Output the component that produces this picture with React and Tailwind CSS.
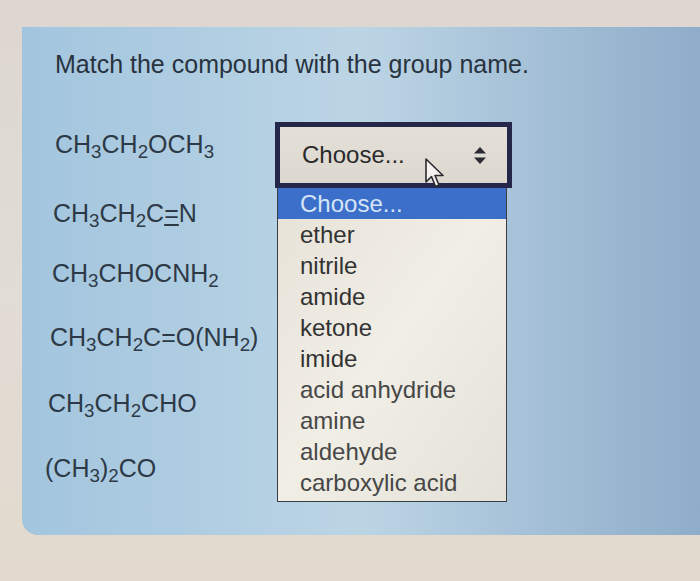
import React from 'react';

const FONT = "font-['Liberation_Sans',Arial,sans-serif]";

// formulas as [text, sub] chunks so subscripts render with <sub>
const compounds = [
  { key: 'ether', pad: 'pl-[10px]', gap: 'mt-0', parts: ['CH', '3', 'CH', '2', 'OCH', '3'] },
  { key: 'nitrile', pad: 'pl-[8px]', gap: 'mt-[39px]', parts: ['CH', '3', 'CH', '2', 'C', '≡', 'N'] },
  { key: 'amide', pad: 'pl-[7px]', gap: 'mt-[30px]', parts: ['CH', '3', 'CHOCNH', '2'] },
  { key: 'imide', pad: 'pl-[5px]', gap: 'mt-[34px]', parts: ['CH', '3', 'CH', '2', 'C=O(NH', '2', ')'] },
  { key: 'ald', pad: 'pl-[3px]', gap: 'mt-[36px]', parts: ['CH', '3', 'CH', '2', 'CHO'] },
  { key: 'ketone', pad: 'pl-0', gap: 'mt-[35px]', parts: ['(CH', '3', ')', '2', 'CO'] },
];

const options = [
  'ether',
  'nitrile',
  'amide',
  'ketone',
  'imide',
  'acid anhydride',
  'amine',
  'aldehyde',
  'carboxylic acid',
];

const Formula = ({ parts }) => (
  <span>
    {parts.map((p, i) => {
      if (p === '≡') {
        // triple bond drawn as an underlined "="
        return (
          <span key={i} className="underline decoration-[1.5px] underline-offset-[2px]">
            =
          </span>
        );
      }
      return /^\d$/.test(p) ? <sub key={i}>{p}</sub> : <span key={i}>{p}</span>;
    })}
  </span>
);

const SortIcon = () => (
  <svg width="14" height="17" viewBox="0 0 14 17" className="shrink-0">
    <path d="M7 0 L13 6.5 L1 6.5 Z" fill="#2b2b33" />
    <path d="M1 10.5 L13 10.5 L7 17 Z" fill="#2b2b33" />
  </svg>
);

const Cursor = () => (
  <svg width="22" height="31" viewBox="0 0 22 31" className="absolute left-[150px] top-[36px]">
    <path
      d="M1 1 L1 24 L6.5 18.5 L10.5 28.5 L14 27 L10 17.5 L18 17.5 Z"
      fill="#f4f2ee"
      stroke="#2a2a30"
      strokeWidth="1.6"
      strokeLinejoin="round"
    />
  </svg>
);

export default function App() {
  return (
    <div
      className={`${FONT} w-[700px] h-[581px] overflow-hidden bg-gradient-to-b from-[#ddd6d1] via-[#e2dcd6] to-[#e3dacd]`}
    >
      {/* Question panel */}
      <div className="mt-[27px] ml-[22px] h-[508px] rounded-bl-[16px] bg-gradient-to-r from-[#a2c5de] via-[#bcd5e5] to-[#8fadca] pl-[23px] pt-[22px]">
        <h1 className="pl-[10px] text-[25px] leading-[30px] text-[#28333f]">
          Match the compound with the group name.
        </h1>

        <div className="flex mt-[43px]">
          {/* Compounds */}
          <div className="w-[230px] pt-[7px] flex flex-col text-[25px] leading-[30px] text-[#2d3946]">
            {compounds.map((c) => (
              <div key={c.key} className={`${c.pad} ${c.gap} whitespace-nowrap`}>
                <Formula parts={c.parts} />
              </div>
            ))}
          </div>

          {/* Select with its open list */}
          <div className="relative w-[237px]">
            <div className="h-[66px] border-[5px] border-[#24274a] bg-gradient-to-b from-[#e4e0d8] to-[#dcd8cf] flex items-center justify-between pl-[22px] pr-[20px]">
              <span className="text-[24px] text-[#2a2a2a]">Choose...</span>
              <SortIcon />
            </div>

            <div className="ml-[2px] w-[230px] border border-[#3c3c44] border-t-0 bg-gradient-to-br from-[#e6e2d8] via-[#f1eee6] to-[#e4e1d8] pb-[3px] text-[24px] leading-[31px]">
              <div className="bg-[#3b6fc9] text-[#d6e4f7] pl-[22px]">Choose...</div>
              {options.map((o, i) => (
                <div
                  key={o}
                  className={`pl-[22px] ${i < 5 ? 'text-[#333]' : 'text-[#474747]'}`}
                >
                  {o}
                </div>
              ))}
            </div>

            <Cursor />
          </div>
        </div>
      </div>
    </div>
  );
}
